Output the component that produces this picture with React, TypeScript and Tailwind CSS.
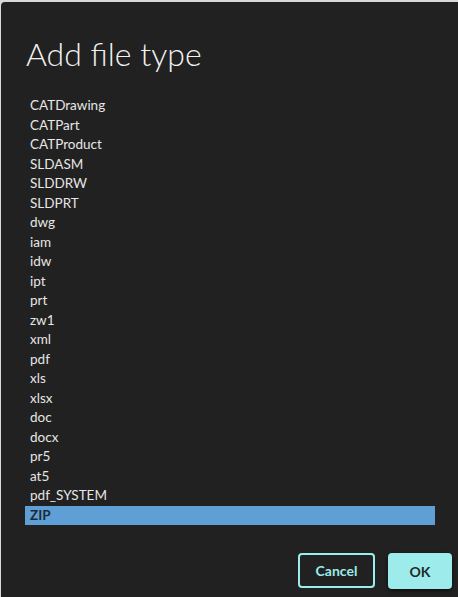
import React from "react";

const fileTypes = [
  "CATDrawing",
  "CATPart",
  "CATProduct",
  "SLDASM",
  "SLDDRW",
  "SLDPRT",
  "dwg",
  "iam",
  "idw",
  "ipt",
  "prt",
  "zw1",
  "xml",
  "pdf",
  "xls",
  "xlsx",
  "doc",
  "docx",
  "pr5",
  "at5",
  "pdf_SYSTEM",
  "ZIP",
];

export default function App() {
  const selected = "ZIP";

  return (
    <div className="h-[597px] w-[458px] overflow-hidden bg-[#d9d9d9] pt-[2px] pl-[1px] font-['Lato',sans-serif]">
      <div className="flex h-[610px] w-[470px] flex-col rounded-tl-[4px] bg-[#212121]">
        <h1 className="pl-[25px] pt-[32px] text-[32px] font-light leading-[40px] text-[#f2f2f2]">
          Add file type
        </h1>
        <ul className="mt-[22px] w-[410px] ml-[24px]">
          {fileTypes.map((t) => (
            <li
              key={t}
              className={
                t === selected
                  ? "h-[19.5px] bg-[#5e9fd6] pl-[5px] text-[13.5px] font-bold leading-[19.5px] text-[#1f2a36]"
                  : "h-[19.5px] pl-[5px] text-[13.5px] leading-[19.5px] text-[#e6e6e6]"
              }
            >
              {t}
            </li>
          ))}
        </ul>
        <div className="mt-[28px] flex w-[451px] items-start justify-end gap-[13px]">
          <button className="h-[35px] w-[77px] rounded-[4px] border-2 border-[#9eebeb] text-[14px] font-bold text-[#9eebeb]">
            Cancel
          </button>
          <button className="h-[36px] w-[64px] rounded-[4px] bg-[#9eebeb] text-[14px] font-bold text-[#1f2a2a] shadow-[0_2px_4px_rgba(0,0,0,0.6)]">
            OK
          </button>
        </div>
      </div>
    </div>
  );
}
